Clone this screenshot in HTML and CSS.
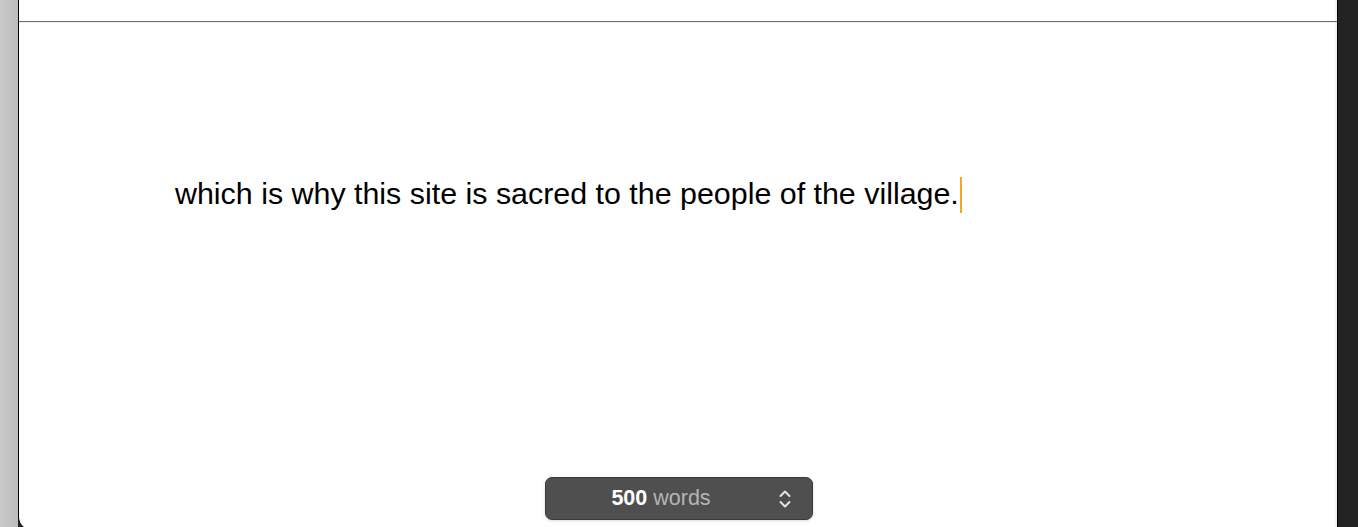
FILE: index.html
```html
<!DOCTYPE html>
<html lang="en">
<head>
    <meta charset="UTF-8">
    <meta name="viewport" content="width=device-width, initial-scale=1.0">
    <title>Draft</title>
    <link rel="stylesheet" href="styles.css">
</head>
<body>
    <div class="desk"></div>
    <div class="editor-window">
        <div class="toolbar"></div>
        <div class="page">
            <p class="line">which is why this site is sacred to the people of the village.<span class="caret"></span></p>
        </div>
        <div class="status">
            <div class="word-count">
                <span class="count"><b>500</b> words</span>
                <svg class="stepper" width="14" height="20" viewBox="0 0 14 20">
                    <path d="M2.5 7 L7 2.5 L11.5 7" fill="none" stroke="#e6e6e6" stroke-width="2" stroke-linecap="round" stroke-linejoin="round"/>
                    <path d="M2.5 13 L7 17.5 L11.5 13" fill="none" stroke="#e6e6e6" stroke-width="2" stroke-linecap="round" stroke-linejoin="round"/>
                </svg>
            </div>
        </div>
    </div>
    <div class="side-panel"></div>
</body>
</html>
```

FILE: styles.css
```css
html, body {
    height: 100%;
}

body {
    margin: 0;
    display: flex;
    overflow: hidden;
    background: #232323;
    font-family: "Liberation Sans", Arial, sans-serif;
}

.desk {
    width: 18px;
    flex-shrink: 0;
    background: linear-gradient(to right, #c9c9c9, #bcbcbc);
}

.editor-window {
    flex: 1;
    display: flex;
    flex-direction: column;
    background: #fff;
    border-left: 1px solid #000;
    border-right: 1px solid #000;
    border-bottom-left-radius: 12px;
    margin-bottom: -2px;
    box-shadow: inset -2px 0 0 #f3f3f3;
}

.toolbar {
    height: 21px;
    flex-shrink: 0;
    border-bottom: 1px solid #6b6b6b;
    box-shadow: 0 1px 1px rgba(0, 0, 0, 0.06);
}

.page {
    flex: 1;
    padding: 154px 0 0 156px;
}

.line {
    margin: 0;
    font-size: 30.4px;
    line-height: 34px;
    color: #000;
}

.caret {
    display: inline-block;
    width: 2px;
    height: 36px;
    margin-left: 1px;
    vertical-align: -9px;
    background: #f5a623;
}

.status {
    display: flex;
    justify-content: center;
    padding: 0 0 9px 0;
}

.word-count {
    position: relative;
    width: 268px;
    height: 43px;
    margin-left: 2px;
    display: flex;
    align-items: center;
    justify-content: center;
    background: #4f4f4f;
    border: 1px solid #3a3a3a;
    border-radius: 7px;
    box-sizing: border-box;
    box-shadow: 0 1px 3px rgba(0, 0, 0, 0.15);
}

.count {
    margin-right: 36px;
    font-size: 21.5px;
    color: #b5b5b5;
}

.count b {
    color: #fff;
}

.stepper {
    position: absolute;
    right: 20px;
    top: 11px;
}

.side-panel {
    width: 20px;
    flex-shrink: 0;
    background: #232323;
}
```
